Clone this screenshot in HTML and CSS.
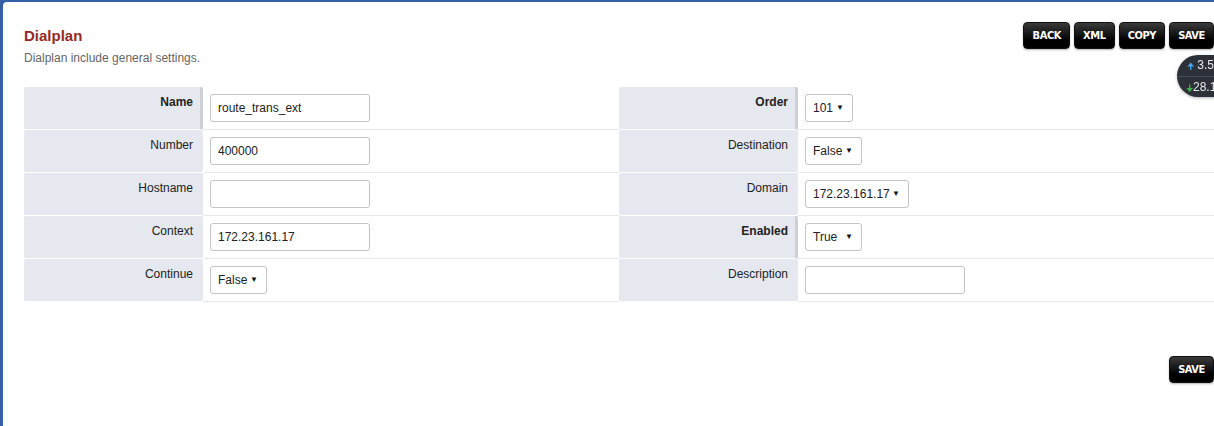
FILE: index.html
```html
<!DOCTYPE html>
<html>
<head>
<meta charset="utf-8">
<title>Dialplan</title>
<link rel="stylesheet" href="styles.css">
</head>
<body>
<div class="panel">
  <div class="header">
    <div class="titles">
      <h1 class="title">Dialplan</h1>
      <p class="subtitle">Dialplan include general settings.</p>
    </div>
    <div class="actions">
      <button class="btn">BACK</button>
      <button class="btn">XML</button>
      <button class="btn">COPY</button>
      <button class="btn">SAVE</button>
    </div>
  </div>

  <div class="form">
    <div class="label req">Name</div>
    <div class="field"><input class="text" type="text" value="route_trans_ext"></div>
    <div class="label req">Order</div>
    <div class="field"><span class="sel w48">101</span></div>

    <div class="label">Number</div>
    <div class="field"><input class="text" type="text" value="400000"></div>
    <div class="label">Destination</div>
    <div class="field"><span class="sel w57">False</span></div>

    <div class="label">Hostname</div>
    <div class="field"><input class="text" type="text" value=""></div>
    <div class="label">Domain</div>
    <div class="field"><span class="sel w104">172.23.161.17</span></div>

    <div class="label">Context</div>
    <div class="field"><input class="text" type="text" value="172.23.161.17"></div>
    <div class="label req">Enabled</div>
    <div class="field"><span class="sel w57">True</span></div>

    <div class="label">Continue</div>
    <div class="field"><span class="sel w57">False</span></div>
    <div class="label">Description</div>
    <div class="field"><input class="text" type="text" value=""></div>
  </div>

  <div class="footer">
    <button class="btn">SAVE</button>
  </div>
</div>

<div class="speed">
  <div class="speed-row"><span class="up">&#129033;</span> 3.5 K</div>
  <div class="speed-row"><span class="down">&#129035;</span>28.1 K</div>
</div>
</body>
</html>
```

FILE: styles.css
```css
html, body {
  margin: 0;
  padding: 0;
  overflow: hidden;
}
body {
  background: #3560a6;
  padding: 2px 0 0 3px;
  height: 426px;
  box-sizing: border-box;
  font-family: "Liberation Sans", Arial, sans-serif;
  font-size: 12px;
  color: #222;
}
.panel {
  background: #fff;
  border-top-left-radius: 4px;
  height: 100%;
  padding: 20px 0 0 21px;
  box-sizing: border-box;
}
.header {
  display: flex;
  justify-content: space-between;
  align-items: flex-start;
}
.title {
  margin: 6px 0 0 0;
  font-size: 15px;
  font-weight: bold;
  color: #952a25;
  line-height: 16px;
}
.subtitle {
  margin: 7px 0 0 0;
  font-size: 12px;
  color: #666;
  line-height: 14px;
}
.actions {
  display: flex;
  gap: 4px;
}
.btn {
  height: 27px;
  padding: 0 8px;
  border: 1px solid #111;
  border-radius: 4px;
  background: linear-gradient(#3a3a3a, #000 70%);
  color: #fff;
  font-family: "DejaVu Sans Condensed", "DejaVu Sans", sans-serif;
  font-weight: bold;
  font-size: 11px;
  letter-spacing: -0.4px;
  box-shadow: 0 1px 2px rgba(0,0,0,0.3);
  cursor: pointer;
}
.form {
  margin-top: 22px;
  display: grid;
  grid-template-columns: 179px 416px 179px 416px;
  grid-auto-rows: 43px;
}
.label {
  background: #e5e8ef;
  border-bottom: 1px solid #fff;
  border-radius: 2px;
  text-align: right;
  padding: 8px 10px 0 0;
  box-sizing: border-box;
  line-height: 14px;
}
.label.req {
  font-weight: bold;
  border-right: 3px solid #cdd0d6;
  padding-right: 7px;
}
.field {
  border-bottom: 1px solid #e5e8ef;
  padding: 7px 0 0 7px;
  box-sizing: border-box;
}
.text {
  width: 160px;
  height: 28px;
  box-sizing: border-box;
  border: 1px solid #c4c4c4;
  border-radius: 3px;
  padding: 0 7px;
  font-family: "Liberation Sans", Arial, sans-serif;
  font-size: 12px;
  color: #222;
  margin: 0;
}
.sel {
  position: relative;
  display: inline-block;
  height: 28px;
  box-sizing: border-box;
  border: 1px solid #c4c4c4;
  border-radius: 3px;
  padding: 0 0 0 7px;
  line-height: 26px;
  font-size: 12px;
  color: #222;
  vertical-align: top;
}
.sel::after {
  content: "\25BC";
  position: absolute;
  right: 8px;
  top: 0;
  font-size: 8px;
  color: #111;
}
.w48 { width: 48px; }
.w57 { width: 57px; }
.w104 { width: 104px; }
.footer {
  display: flex;
  justify-content: flex-end;
  margin-top: 54px;
}
.speed {
  position: fixed;
  top: 55px;
  right: -40px;
  width: 77px;
  height: 42px;
  background: #2c3139;
  border-radius: 21px 0 0 21px;
  color: #e8e8e8;
  font-size: 12px;
  box-shadow: 0 1px 3px rgba(0,0,0,0.3);
}
.speed-row {
  height: 21px;
  line-height: 20px;
  padding-left: 10px;
  box-sizing: border-box;
}
.speed-row + .speed-row {
  border-top: 1px solid #454b54;
  padding-left: 9px;
}
.up { color: #4aa6e8; font-size: 9px; }
.down { color: #3cb34a; font-size: 9px; }
```
